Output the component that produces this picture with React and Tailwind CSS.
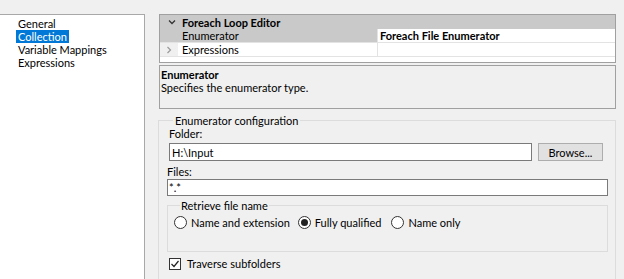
import React from "react";

function Radio({ checked, label }) {
  return (
    <div className="flex items-center gap-[4px]">
      <span className="w-[13px] h-[13px] rounded-full border border-[#333] bg-white flex items-center justify-center">
        {checked && <span className="w-[7px] h-[7px] rounded-full bg-[#222]" />}
      </span>
      <span>{label}</span>
    </div>
  );
}

export default function App() {
  return (
    <div
      className="w-[624px] h-[279px] bg-[#f0f0f0] flex items-start overflow-hidden text-[11px] text-black leading-[13px]"
      style={{ fontFamily: 'Lato, "Open Sans", sans-serif' }}
    >
      {/* Left list */}
      <div className="w-[145px] h-[265px] shrink-0 mt-[14px] bg-white border-t border-r border-[#a8a8a8] pt-[2px] pl-[16px] flex flex-col items-start">
        <div className="px-[2px] h-[13px]">General</div>
        <div className="px-[2px] h-[13px] bg-[#0078d7] text-white">Collection</div>
        <div className="px-[2px] h-[13px]">Variable Mappings</div>
        <div className="px-[2px] h-[13px]">Expressions</div>
      </div>

      {/* Right side */}
      <div className="ml-[13px] w-[458px] shrink-0 pt-[14px]">
        {/* Property grid */}
        <div className="ml-[1px] w-[457px] h-[49px] border border-[#a0a0a0] bg-white flex flex-col">
          <div className="h-[14px] shrink-0 bg-[#c9c9c9] flex items-center">
            <span className="w-[22px] flex justify-center pl-[1px]">
              <svg width="8" height="6" viewBox="0 0 8 6">
                <path d="M1 1.5 L4 4.5 L7 1.5" fill="none" stroke="#333" strokeWidth="1.3" />
              </svg>
            </span>
            <span className="font-bold">Foreach Loop Editor</span>
          </div>
          <div className="h-[14px] shrink-0 flex border-b border-[#e3e3e3]">
            <div className="w-[218px] bg-[#c9c9c9] pl-[22px] flex items-center border-r border-[#e3e3e3]">Enumerator</div>
            <div className="flex-1 pl-[2px] font-bold flex items-center">Foreach File Enumerator</div>
          </div>
          <div className="h-[14px] shrink-0 flex border-b border-[#e3e3e3]">
            <div className="w-[18px] bg-[#f0f0f0] flex items-center justify-center">
              <svg width="6" height="8" viewBox="0 0 6 8">
                <path d="M1.5 1 L4.5 4 L1.5 7" fill="none" stroke="#999" strokeWidth="1.2" />
              </svg>
            </div>
            <div className="w-[200px] pl-[4px] flex items-center border-r border-[#e3e3e3]">Expressions</div>
            <div className="flex-1" />
          </div>
        </div>

        {/* Description */}
        <div className="ml-[1px] mt-[2px] w-[457px] h-[44px] border border-[#a0a0a0] px-[1px] pt-[2px]">
          <div className="font-bold">Enumerator</div>
          <div>Specifies the enumerator type.</div>
        </div>

        {/* Enumerator configuration */}
        <fieldset className="mt-[5px] w-[458px] border border-[#dcdcdc] pl-[8px] pr-[7px] pb-[30px]">
          <legend className="ml-[6px] px-[2px] leading-[13px]">Enumerator configuration</legend>
          <div className="mt-[0px] pl-[2px]">Folder:</div>
          <div className="mt-[3px] flex items-center pl-[2px]">
            <div className="w-[363px] h-[18px] border border-[#7a7a7a] bg-white pl-[2px] flex items-center">H:\Input</div>
            <div className="ml-[6px] w-[65px] h-[18px] border border-[#adadad] bg-[#e1e1e1] flex items-center justify-center">Browse...</div>
          </div>
          <div className="mt-[4px]">Files:</div>
          <div className="mt-[1px] w-[441px] h-[17px] border border-[#7a7a7a] bg-white pl-[1px] flex items-center">*.*</div>

          <fieldset className="mt-[3px] w-[441px] h-[53px] border border-[#dcdcdc] pl-[6px]">
            <legend className="ml-[6px] px-[1px] leading-[13px]">Retrieve file name</legend>
            <div className="mt-[4px] flex items-center">
              <Radio label="Name and extension" />
              <div className="ml-[8px]"><Radio checked label="Fully qualified" /></div>
              <div className="ml-[10px]"><Radio label="Name only" /></div>
            </div>
          </fieldset>

          <div className="mt-[5px] flex items-center gap-[6px] pl-[2px]">
            <span className="w-[12px] h-[12px] border border-[#333] bg-white flex items-center justify-center">
              <svg width="10" height="10" viewBox="0 0 10 10">
                <path d="M1.5 5 L4 7.5 L8.5 2" fill="none" stroke="#222" strokeWidth="1.2" />
              </svg>
            </span>
            <span>Traverse subfolders</span>
          </div>
        </fieldset>
      </div>
    </div>
  );
}
